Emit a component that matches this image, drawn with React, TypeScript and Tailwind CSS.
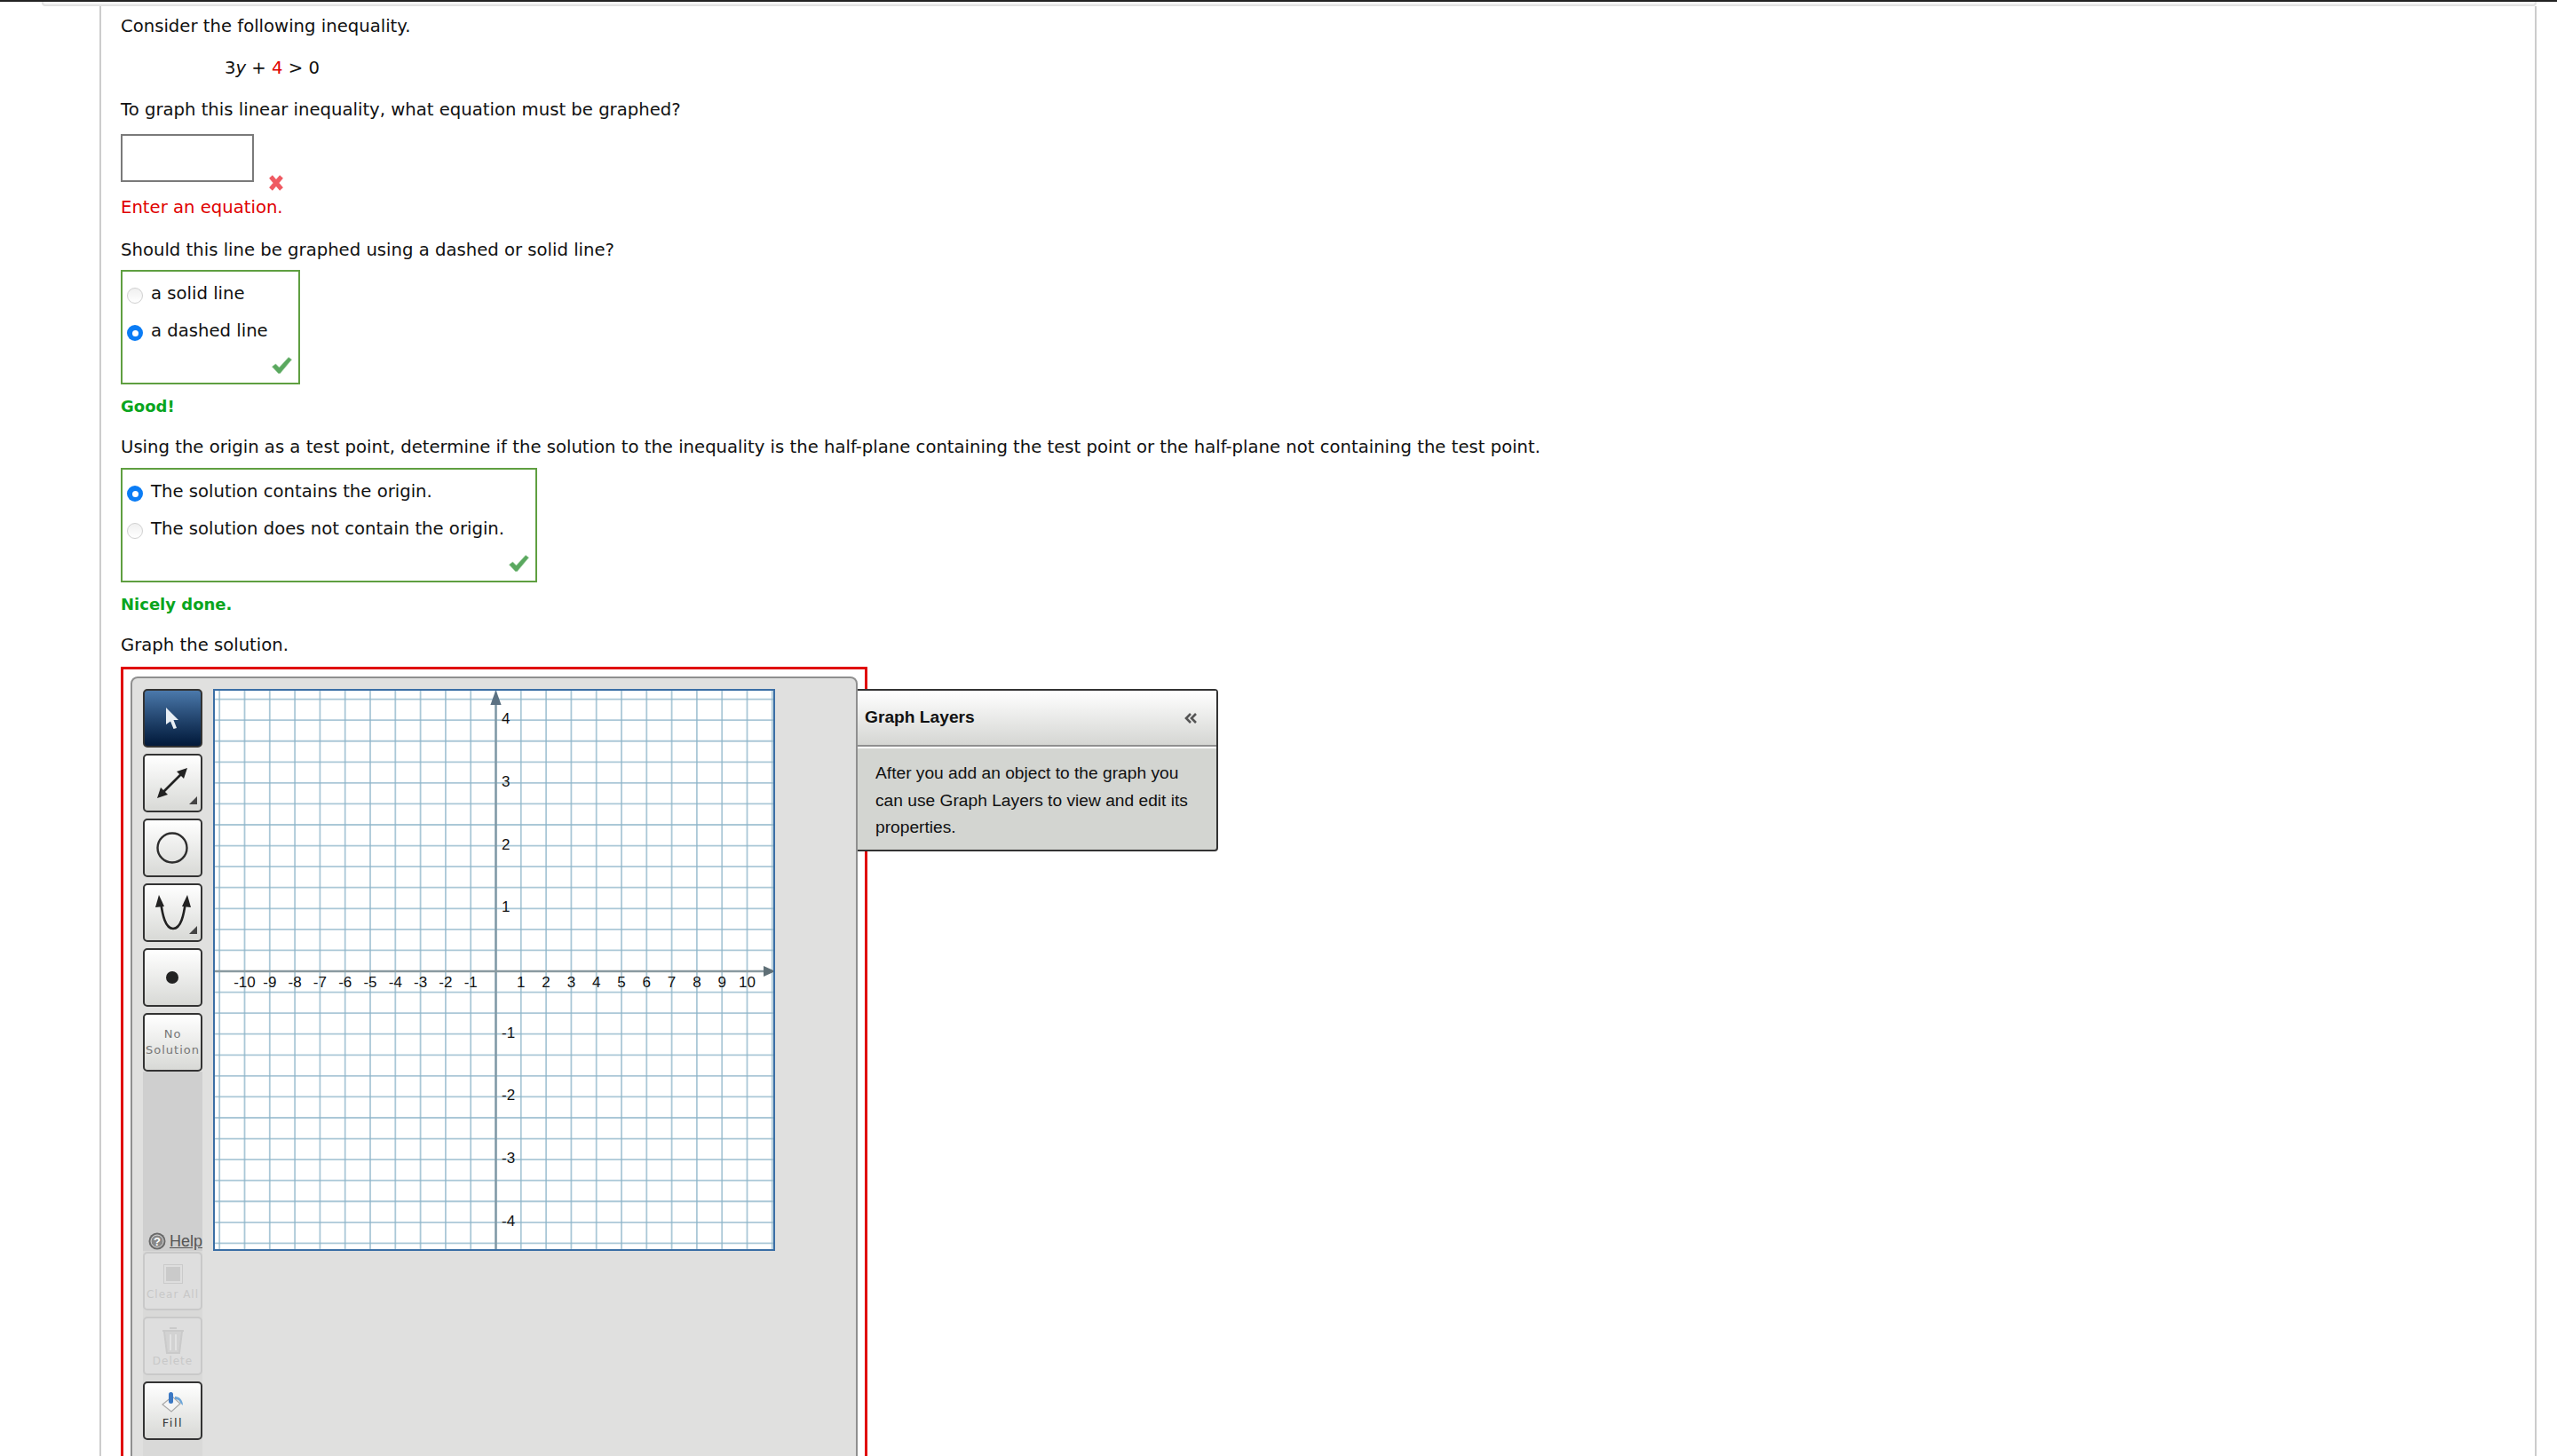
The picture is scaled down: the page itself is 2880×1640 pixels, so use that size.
import React from 'react';

const XS = Array.from({ length: 23 }, (_, i) => 316.5 + (i - 11) * 28.3);
const YS = Array.from({ length: 27 }, (_, i) => 316 + (i - 13) * 23.57);
const X_LABELS = [-10, -9, -8, -7, -6, -5, -4, -3, -2, -1, 1, 2, 3, 4, 5, 6, 7, 8, 9, 10];
const Y_LABELS = [4, 3, 2, 1, -1, -2, -3, -4];

function Radio({ on }: { on?: boolean }) {
  return on ? (
    <span className="mt-[6px] flex h-[18px] w-[18px] shrink-0 items-center justify-center rounded-full bg-[#0a7cf5]">
      <span className="h-[7px] w-[7px] rounded-full bg-white" />
    </span>
  ) : (
    <span className="mt-[6px] block h-[18px] w-[18px] shrink-0 rounded-full border border-[#d0d0d0] bg-gradient-to-b from-[#f0f0f0] to-white" />
  );
}

function Check() {
  return (
    <svg width="23" height="19" viewBox="0 0 23 19" className="absolute">
      <path d="M0.5 11 L4.5 8 L8.5 12 L19 0.5 L22.5 3 L9.5 18.5 L7.5 18.5 Z" fill="#5aa85f" stroke="#8cc48c" strokeWidth="0.6" />
    </svg>
  );
}

function ChoiceBox({ w, opts }: { w: string; opts: { label: string; on?: boolean }[] }) {
  return (
    <div className={`relative flex h-[129px] flex-col border-2 border-[#5f9f41] pl-[5px] pt-[12px] ${w}`}>
      {opts.map(o => (
        <div key={o.label} className="flex h-[42px] gap-[9px]">
          <Radio on={o.on} />
          <span className="mt-[1px] leading-[24px]">{o.label}</span>
        </div>
      ))}
      <div className="absolute bottom-[29px] right-[30px]"><Check /></div>
    </div>
  );
}

function ToolButton({ active, disabled, children }: { active?: boolean; disabled?: boolean; children: React.ReactNode }) {
  let cls = 'border-[#333] bg-gradient-to-b from-white to-[#d8d9d6]';
  if (active) cls = 'border-[#333] bg-gradient-to-b from-[#4b79ab] to-[#03193a]';
  if (disabled) cls = 'border-[#c9c9c9] bg-[#dedede]';
  return (
    <div className={`relative flex h-[66px] w-[67px] shrink-0 flex-col items-center justify-center rounded-[5px] border-2 ${cls}`}>
      {children}
    </div>
  );
}

function Corner() {
  return (
    <svg width="9" height="9" viewBox="0 0 9 9" className="absolute bottom-[7px] right-[4px]">
      <path d="M9 0 V9 H0 Z" fill="#444" />
    </svg>
  );
}

function Graph() {
  return (
    <div className="h-[633px] w-[633px] shrink-0 border-2 border-[#3a6ea5] bg-white">
      <svg width="629" height="629" viewBox="0 0 629 629" className="block font-['Liberation_Sans',Arial,sans-serif]">
        {XS.map(x => (
          <line key={x} x1={x} x2={x} y1="0" y2="629" stroke="#8ab3c8" strokeOpacity="0.72" strokeWidth="1.8" />
        ))}
        {YS.map(y => (
          <line key={y} x1="0" x2="629" y1={y} y2={y} stroke="#8ab3c8" strokeOpacity="0.72" strokeWidth="1.8" />
        ))}
        <line x1="316.5" x2="316.5" y1="10" y2="629" stroke="#7f97a4" strokeWidth="2.4" />
        <line x1="0" x2="620" y1="316" y2="316" stroke="#8a9aa0" strokeWidth="2.4" />
        <path d="M316.5 -1 L322.6 16 H310.4 Z" fill="#5b7182" />
        <path d="M618 310 L631 316 L618 322 Z" fill="#5f6f76" />
        {X_LABELS.map(n => (
          <text key={n} x={316.5 + n * 28.3} y="334" textAnchor="middle" fontSize="17" fill="#111">{n}</text>
        ))}
        {Y_LABELS.map(n => (
          <text key={n} x="323" y={316 - n * 70.7 + 4} fontSize="17" fill="#111">{n}</text>
        ))}
      </svg>
    </div>
  );
}

function Toolbar() {
  return (
    <div className="flex h-[900px] w-[67px] shrink-0 flex-col">
      <div className="flex flex-col gap-[7px]">
        <ToolButton active>
          <svg width="16" height="26" viewBox="0 0 16 26" className="mr-[2px]">
            <path d="M1 1 L15 15 H9.5 L13 24 L9.5 25 L6 16.5 L1 20 Z" fill="#e8eef4" />
          </svg>
        </ToolButton>
        <ToolButton>
          <svg width="40" height="40" viewBox="0 0 40 40" fill="#222" className="mr-[2px]">
            <line x1="8" y1="32" x2="32" y2="8" stroke="#222" strokeWidth="2.6" />
            <path d="M37 3 L33 15 L25 7 Z" />
            <path d="M3 37 L7 25 L15 33 Z" />
          </svg>
          <Corner />
        </ToolButton>
        <ToolButton>
          <svg width="38" height="38" viewBox="0 0 38 38" className="mr-[2px]">
            <circle cx="19" cy="19" r="16.5" fill="none" stroke="#2e2e2e" strokeWidth="2.4" />
          </svg>
        </ToolButton>
        <ToolButton>
          <svg width="44" height="52" viewBox="0 0 44 52" fill="#222">
            <path d="M8 14 C10 28 13 44 22 44 C31 44 34 28 36 14" fill="none" stroke="#222" strokeWidth="2.6" />
            <path d="M6 6 L12 19 L2 20 Z" />
            <path d="M38 6 L42 20 L32 19 Z" />
          </svg>
          <Corner />
        </ToolButton>
        <ToolButton>
          <span className="mr-[2px] h-[14px] w-[14px] rounded-full bg-[#222]" />
        </ToolButton>
        <ToolButton>
          <span className="text-center text-[13px] leading-[18px] tracking-[1px] text-[#777]">No<br />Solution</span>
        </ToolButton>
      </div>
      <div className="flex h-[202px] flex-col justify-end bg-[#cfcfcf]">
        <div className="flex h-[22px] items-center justify-end gap-[4px]">
          <svg width="20" height="20" viewBox="0 0 20 20">
            <circle cx="10" cy="10" r="9.5" fill="#6a6a6a" />
            <circle cx="10" cy="10" r="7" fill="#888" stroke="#ddd" strokeWidth="1" />
            <text x="10" y="14.5" textAnchor="middle" fontSize="13" fontWeight="700" fill="#fff" fontFamily="Liberation Sans">?</text>
          </svg>
          <span className="font-['Liberation_Sans',Arial,sans-serif] text-[18px] leading-[20px] text-[#555] underline">Help</span>
        </div>
      </div>
      <div className="flex flex-1 flex-col gap-[7px] bg-[#d9d9d8] pt-[1px]">
        <ToolButton disabled>
          <span className="mb-[5px] mt-[2px] flex h-[22px] w-[22px] items-center justify-center border border-[#cacaca]">
            <span className="h-[16px] w-[16px] bg-[#cacaca]" />
          </span>
          <span className="text-[12px] leading-[14px] tracking-[1px] text-[#c8c8c8]">Clear All</span>
        </ToolButton>
        <ToolButton disabled>
          <svg width="26" height="32" viewBox="0 0 26 32" fill="none" stroke="#cacaca" strokeWidth="2" className="mt-[2px]">
            <path d="M1 5 H25 M9 2 H17" />
            <path d="M3 6 L6 30 H20 L23 6" fill="#d2d2d2" />
            <path d="M10 9 V27 M16 9 V27" stroke="#e2e2e2" />
          </svg>
          <span className="text-[12px] leading-[14px] tracking-[1px] text-[#c8c8c8]">Delete</span>
        </ToolButton>
        <ToolButton>
          <svg width="26" height="24" viewBox="0 0 26 24" className="mb-[3px]">
            <path d="M1 14 L12 5 L21 13 L11 22 Z" fill="#f4f4f4" stroke="#a8a8a8" strokeWidth="1.2" />
            <rect x="8" y="0" width="5" height="13" rx="2.5" fill="#3b78c4" />
            <path d="M15 5 C20 5 24 9 24 15 L21 12 C20 9 18 8 15 8 Z" fill="#6ea6d8" />
          </svg>
          <span className="text-[13px] font-normal leading-[16px] tracking-[1.5px] text-[#333]">Fill</span>
        </ToolButton>
      </div>
    </div>
  );
}

function GraphLayers() {
  return (
    <div className="absolute left-[827px] top-[22px] w-[406px] rounded-r-[4px] border-y-2 border-r-2 border-[#333] bg-[#d3d5d1] font-['Liberation_Sans',Arial,sans-serif]">
      <div className="flex h-[63px] items-center justify-between border-b-2 border-[#8f8f8f] bg-gradient-to-b from-white to-[#d5d6d3] pl-[8px] pr-[21px] text-[19.2px] font-bold text-[#111]">
        <span>Graph Layers</span>
        <svg width="15" height="12" viewBox="0 0 15 12" fill="none" stroke="#555" strokeWidth="2.6">
          <path d="M7 1 L2 6 L7 11 M13 1 L8 6 L13 11" />
        </svg>
      </div>
      <div className="border-t-2 border-white pb-[9px] pl-[20px] pr-[20px] pt-[13px] text-[19.2px] leading-[30.5px] text-[#111]">
        After you add an object to the graph you can use Graph Layers to view and edit its properties.
      </div>
    </div>
  );
}

export default function App() {
  return (
    <div className="h-[1640px] overflow-hidden bg-white font-['DejaVu_Sans',Verdana,sans-serif] text-[19.65px] text-[#111]">
      {/* top strip */}
      <div className="h-[2px] bg-[#222]" />
      <div className="ml-[47px] mr-[23px] h-[5px] rounded-b-[4px] border-x-2 border-b-2 border-[#e2e2e2] bg-[#f6f6f6]" />

      <div className="ml-[112px] mr-[23px] h-[1640px] border-x-2 border-[#cccccc] pl-[22px]">
        <p className="pt-[9px] leading-[28px]">Consider the following inequality.</p>
        <p className="ml-[117px] mt-[19px] leading-[28px]"><span>3<i>y</i></span> + <span className="text-[#e00000]">4</span> &gt; 0</p>
        <p className="mt-[19px] leading-[28px]">To graph this linear inequality, what equation must be graphed?</p>

        <div className="mt-[13px] flex h-[54px]">
          <div className="h-[54px] w-[150px] border-2 border-[#7a7a7a]" />
          <svg width="20" height="20" viewBox="0 0 20 20" className="ml-[15px] mt-[45px]">
            <path d="M4 3 L16 17 M16 3 L4 17" stroke="#ef5a62" strokeWidth="5" />
          </svg>
        </div>
        <p className="mt-[15px] leading-[28px] text-[#e00000]">Enter an equation.</p>
        <p className="mt-[20px] leading-[28px]">Should this line be graphed using a dashed or solid line?</p>

        <div className="mt-[8px]">
          <ChoiceBox w="w-[202px]" opts={[{ label: 'a solid line' }, { label: 'a dashed line', on: true }]} />
        </div>
        <p className="mt-[11px] text-[18px] font-bold leading-[28px] text-[#0aa51e]">Good!</p>
        <p className="mt-[18px] leading-[28px]">Using the origin as a test point, determine if the solution to the inequality is the half-plane containing the test point or the half-plane not containing the test point.</p>

        <div className="mt-[9px]">
          <ChoiceBox w="w-[469px]" opts={[{ label: 'The solution contains the origin.', on: true }, { label: 'The solution does not contain the origin.' }]} />
        </div>
        <p className="mt-[11px] text-[18px] font-bold leading-[28px] text-[#0aa51e]">Nicely done.</p>
        <p className="mt-[18px] leading-[28px]">Graph the solution.</p>

        <div className="relative mt-[10px] w-[841px] border-[3px] border-[#e00000] px-[8px] pt-[8px]">
          <div className="flex h-[1000px] gap-[12px] rounded-t-[8px] border-2 border-[#8f8f8f] bg-[#e0e0df] pl-[12px] pt-[12px]">
            <Toolbar />
            <Graph />
          </div>
          <GraphLayers />
        </div>
      </div>
    </div>
  );
}
